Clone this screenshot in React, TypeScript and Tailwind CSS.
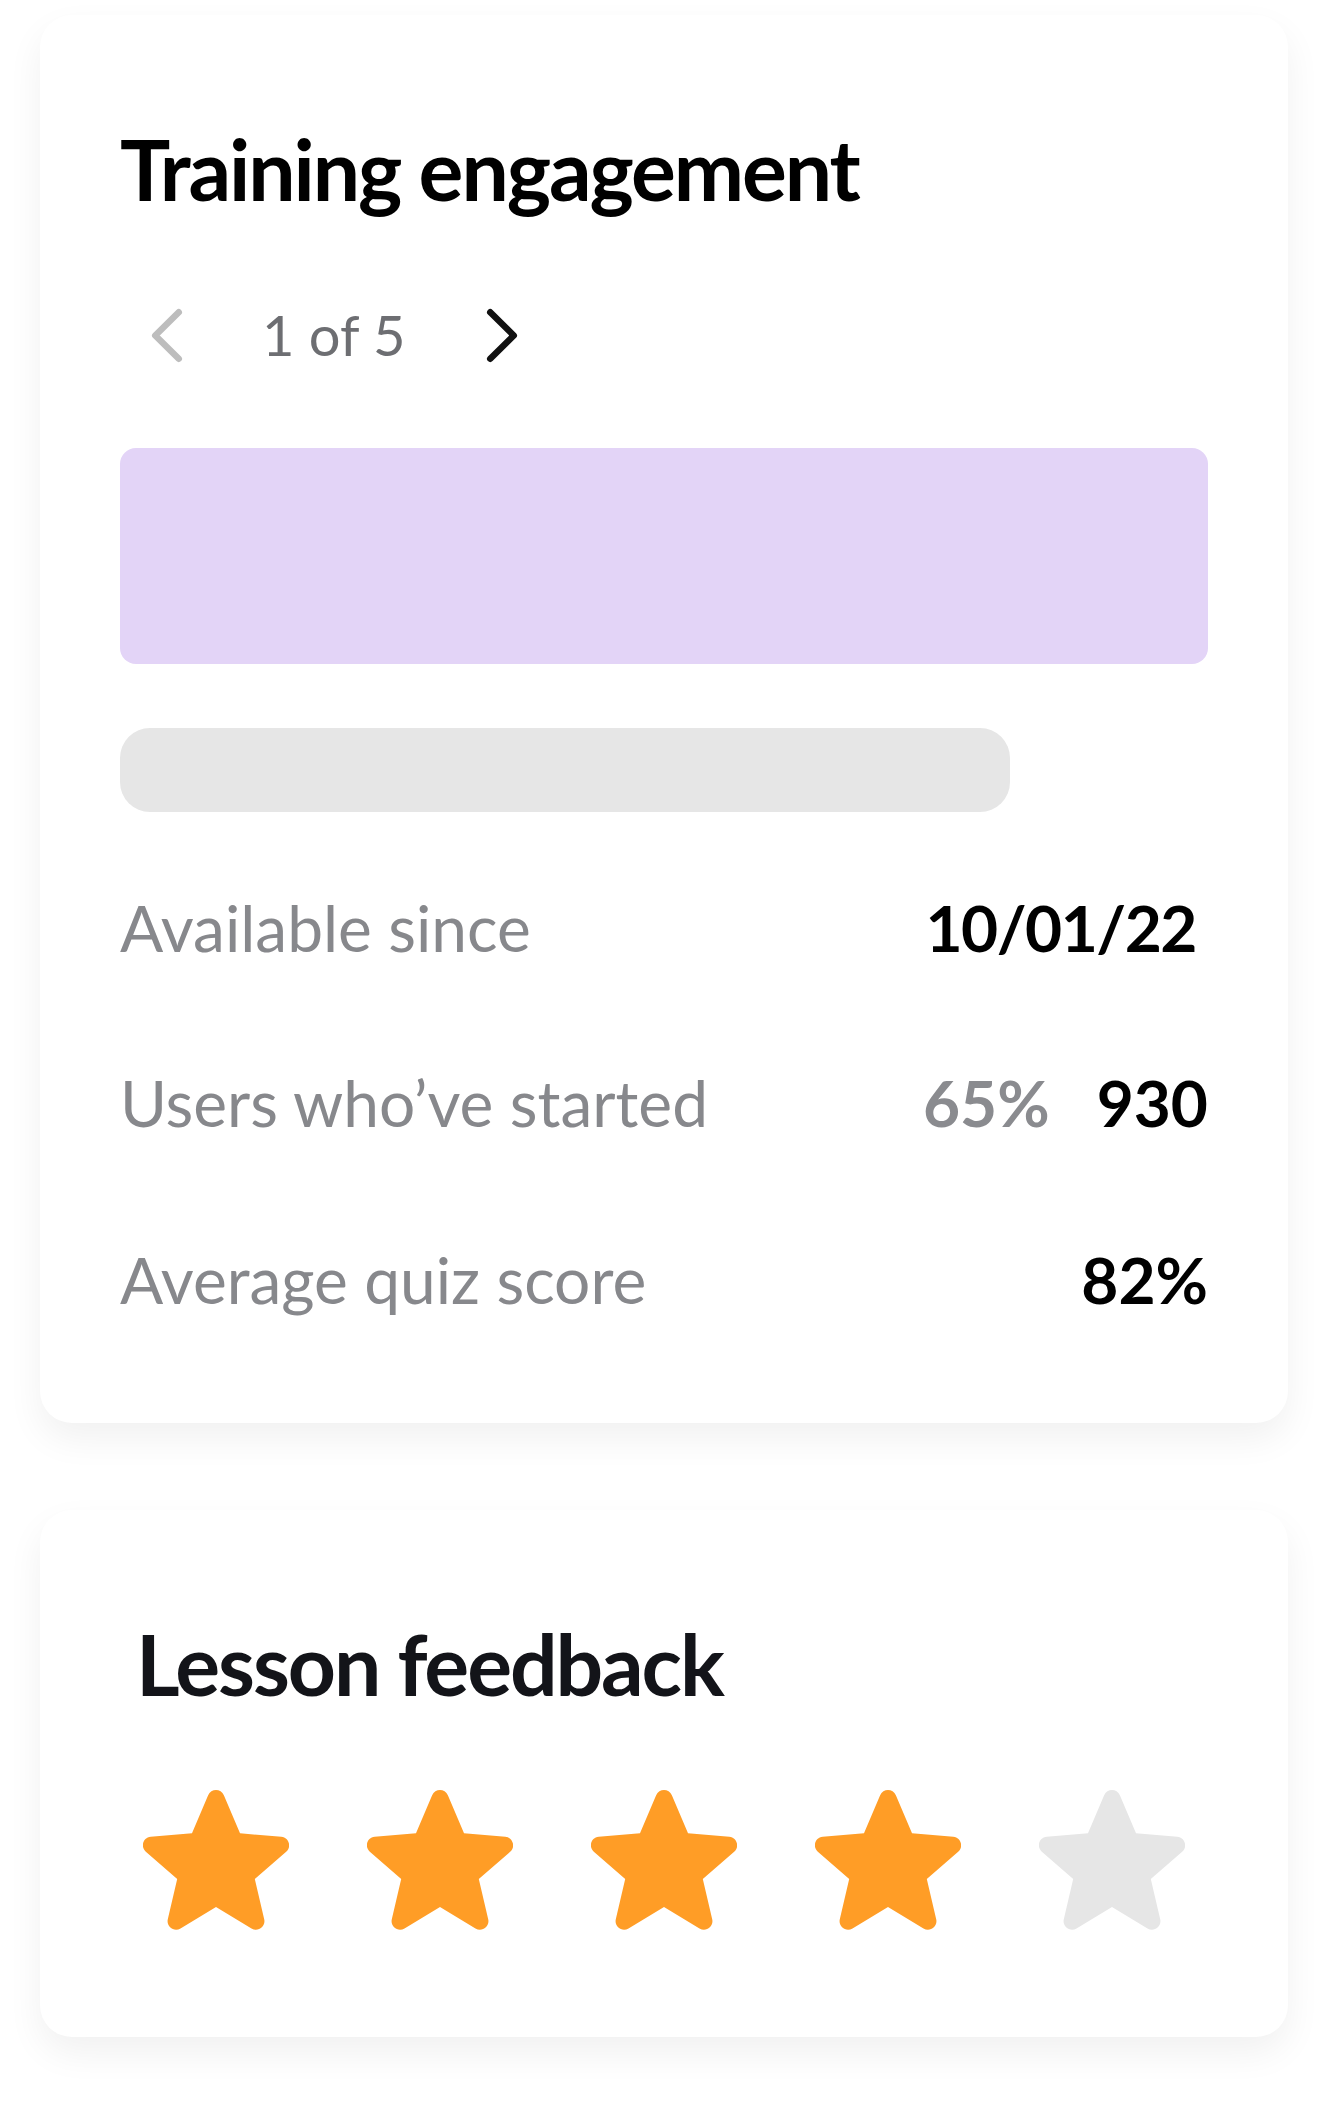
import React from "react";

const STAR_PATH =
  "M12 17.27l4.15 2.51c.76.46 1.69-.22 1.49-1.08l-1.1-4.72 3.67-3.18c.67-.58.31-1.68-.57-1.75l-4.83-.41-1.89-4.46c-.34-.81-1.5-.81-1.84 0L9.19 8.63l-4.83.41c-.88.07-1.24 1.17-.57 1.75l3.67 3.18-1.1 4.72c-.2.86.73 1.54 1.49 1.08l4.15-2.5z";

const Star = ({ filled }: { filled: boolean }) => (
  <svg
    width="146"
    height="140"
    viewBox="3.47 3.57 17.06 16.38"
    fill="currentColor"
    className={filled ? "text-[#ff9d26]" : "text-[#e6e6e6]"}
  >
    <path d={STAR_PATH} />
  </svg>
);

const Chevron = ({ dir, className }: { dir: "left" | "right"; className?: string }) => (
  <svg
    width="34"
    height="58"
    viewBox="0 0 34 58"
    fill="none"
    stroke="currentColor"
    strokeWidth="6.5"
    strokeLinecap="round"
    strokeLinejoin="round"
    className={className}
  >
    {dir === "left" ? (
      <polyline points="28.75,6.25 5.25,29.5 28.75,52.75" />
    ) : (
      <polyline points="5.25,6.25 28.75,29.5 5.25,52.75" />
    )}
  </svg>
);

const StatRow = ({ label, children, className }: { label: string; children: React.ReactNode; className?: string }) => (
  <div className={`flex h-[64px] items-baseline justify-between text-[64px] leading-none ${className ?? ""}`}>
    <span className="text-[#87888c]">{label}</span>
    {children}
  </div>
);

export default function App() {
  return (
    <div className="min-h-[2104px] bg-white pt-[15px] font-['Lato','Noto_Sans',sans-serif]">
      {/* Training engagement card */}
      <div className="mx-[40px] rounded-[32px] bg-white px-[80px] pt-[112px] pb-[111px] shadow-[0_16px_36px_rgba(0,0,0,0.06)]">
        <h1 className="text-[84px] leading-none font-bold tracking-[-0.025em] text-black">Training engagement</h1>

        <div className="mt-[95px] flex h-[58px] items-center">
          <Chevron dir="left" className="ml-[30px] text-[#bdbdbd]" />
          <span className="ml-[78px] text-[56px] leading-none text-[#6d6e72]">1 of 5</span>
          <Chevron dir="right" className="ml-[80px] text-[#111111]" />
        </div>

        <div className="mt-[84px] h-[216px] rounded-[16px] bg-[#e3d4f7]" />
        <div className="mt-[64px] h-[84px] w-[890px] rounded-[30px] bg-[#e6e6e6]" />

        <StatRow label="Available since" className="mt-[84px]">
          <span className="pr-[12px] font-bold tracking-[-0.023em] text-black">10/01/22</span>
        </StatRow>
        <StatRow label="Users who’ve started" className="mt-[111px]">
          <span className="flex gap-[47px] font-bold">
            <span className="text-[#8a8b8f]">65%</span>
            <span className="text-black">930</span>
          </span>
        </StatRow>
        <StatRow label="Average quiz score" className="mt-[113px]">
          <span className="font-bold text-black">82%</span>
        </StatRow>
      </div>

      {/* Lesson feedback card */}
      <div className="mx-[40px] mt-[87px] rounded-[32px] bg-white pt-[112px] pb-[107px] shadow-[0_16px_36px_rgba(0,0,0,0.06)]">
        <h2 className="pl-[96px] text-[84px] leading-none font-bold tracking-[-0.025em] text-[#131419]">Lesson feedback</h2>
        <div className="mt-[84px] flex gap-[78px] pl-[103px]">
          {[true, true, true, true, false].map((filled, i) => (
            <Star key={i} filled={filled} />
          ))}
        </div>
      </div>
    </div>
  );
}
